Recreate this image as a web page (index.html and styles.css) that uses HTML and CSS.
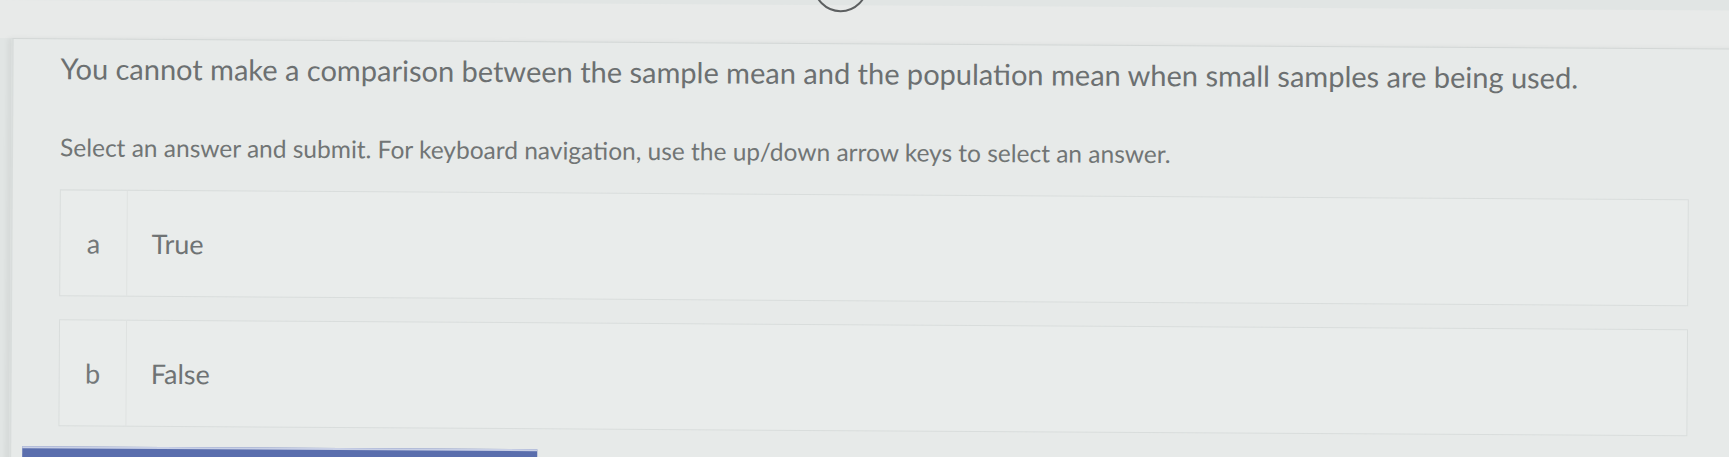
FILE: index.html
```html
<!DOCTYPE html>
<html lang="en">
<head>
<meta charset="utf-8">
<title>Question</title>
<link rel="stylesheet" href="styles.css">
</head>
<body>
  <div class="screen">
    <header class="topbar">
      <span class="step-ring"></span>
    </header>
    <main class="card">
      <h1 class="question">You cannot make a comparison between the sample mean and the population mean when small samples are being used.</h1>
      <p class="hint">Select an answer and submit. For keyboard navigation, use the up/down arrow keys to select an answer.</p>
      <div class="options" role="radiogroup">
        <div class="option" role="radio" aria-checked="false">
          <span class="key">a</span>
          <span class="label">True</span>
        </div>
        <div class="option" role="radio" aria-checked="false">
          <span class="key">b</span>
          <span class="label">False</span>
        </div>
      </div>
      <div class="submit-bar"></div>
    </main>
  </div>
</body>
</html>
```
FILE: styles.css
```css
html, body {
  margin: 0;
  padding: 0;
  height: 100%;
  overflow: hidden;
}

body {
  background: #e1e5e4;
  font-family: Lato, "Open Sans", sans-serif;
}

/* whole screen sits at a slight tilt */
.screen {
  width: 1760px;
  transform: rotate(0.35deg);
  transform-origin: 0 0;
}

.topbar {
  height: 38px;
  background: #e8eae9;
  display: flex;
  align-items: flex-start;
  padding-left: 813px;
  overflow: visible;
}

.step-ring {
  display: block;
  flex: none;
  width: 51px;
  height: 51px;
  margin-top: -48px;
  border: 2.5px solid #5d6061;
  border-radius: 50%;
}

.card {
  margin-left: 12px;
  background: #e7eae9;
  border-top: 1px solid #d3d7d6;
  border-left: 2px solid #d9dddc;
  box-shadow: -4px 0 5px rgba(0, 0, 0, 0.05);
  padding: 11px 70px 0 47px;
  min-height: 430px;
}

.question {
  margin: 0;
  font-weight: 400;
  font-size: 29px;
  line-height: 36px;
  color: #6c7071;
  white-space: nowrap;
}

.hint {
  margin: 46px 0 0;
  font-size: 24.5px;
  line-height: 29px;
  color: #717575;
  white-space: nowrap;
}

.options {
  margin-top: 28px;
  display: flex;
  flex-direction: column;
  gap: 23px;
}

.option {
  height: 105px;
  display: flex;
  align-items: stretch;
  border: 1px solid #d9dddc;
  background: #e9eceb;
}

.key {
  width: 66px;
  flex: none;
  display: flex;
  align-items: center;
  justify-content: center;
  border-right: 1px solid #dfe2e1;
  font-size: 27px;
  color: #747879;
}

.label {
  display: flex;
  align-items: center;
  padding-left: 24px;
  font-size: 27px;
  color: #6f7374;
}

.submit-bar {
  margin: 20px 0 0 -36px;
  width: 515px;
  height: 30px;
  background: #5a6ead;
  border-top: 2px solid #c9d0e6;
}
```
